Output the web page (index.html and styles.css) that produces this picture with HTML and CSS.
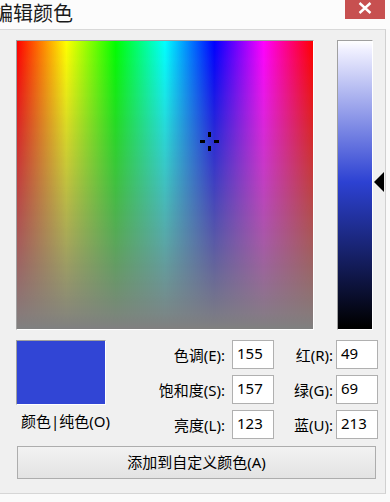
FILE: index.html
```html
<!DOCTYPE html>
<html lang="zh-CN">
<head>
<meta charset="utf-8">
<title>编辑颜色</title>
<link rel="stylesheet" href="styles.css">
</head>
<body>
<div class="window">
  <div class="titlebar">
    <span class="title">编辑颜色</span>
    <div class="close">
      <svg width="14" height="12" viewBox="0 0 14 12"><path d="M1.5 1 L12.5 11 M12.5 1 L1.5 11" stroke="#fff" stroke-width="2.4" fill="none"/></svg>
    </div>
  </div>
  <div class="dialog">
    <div class="pickers">
      <div class="spectrum">
        <div class="cross">
          <span class="arm arm-t"></span>
          <span class="arm arm-b"></span>
          <span class="arm arm-l"></span>
          <span class="arm arm-r"></span>
        </div>
      </div>
      <div class="lumwrap">
        <div class="lum"></div>
        <div class="arrow"></div>
      </div>
    </div>
    <div class="controls">
      <div class="swatchcol">
        <div class="swatch"></div>
        <div class="swlabel">颜色|纯色(O)</div>
      </div>
      <div class="fields">
        <label class="lbl">色调(E):</label><div class="inp">155</div>
        <label class="lbl lbl2">红(R):</label><div class="inp">49</div>
        <label class="lbl">饱和度(S):</label><div class="inp">157</div>
        <label class="lbl lbl2">绿(G):</label><div class="inp">69</div>
        <label class="lbl">亮度(L):</label><div class="inp">123</div>
        <label class="lbl lbl2">蓝(U):</label><div class="inp">213</div>
      </div>
    </div>
    <div class="add">添加到自定义颜色(A)</div>
  </div>
</div>
</body>
</html>
```
FILE: styles.css
```css
html, body {
  margin: 0;
  padding: 0;
}
body {
  width: 390px;
  height: 502px;
  overflow: hidden;
  background: #fafafa;
  font-family: "Noto Sans", "Noto Sans CJK SC", sans-serif;
  color: #000;
}
.window {
  width: 390px;
  height: 502px;
}
.titlebar {
  height: 29px;
  position: relative;
  background: #fcfcfc;
  display: flex;
  align-items: flex-start;
}
.title {
  margin-left: -7px;
  margin-top: 0px;
  font-family: "Noto Sans CJK SC", sans-serif;
  font-size: 20px;
  line-height: 25px;
  color: #1a1a1a;
  white-space: nowrap;
}
.close {
  position: absolute;
  left: 345px;
  top: 0;
  width: 40px;
  height: 19px;
  background: #c75050;
  display: flex;
  align-items: center;
  justify-content: center;
}
.close svg {
  display: block;
  margin-top: -3px;
}
.dialog {
  box-sizing: border-box;
  width: 386px;
  height: 465px;
  background: #f0f0f0;
  border-top: 1px solid #d9d9d9;
  border-right: 1px solid #d0d0d0;
  border-bottom: 1px solid #d6d6d6;
  padding: 10px 0 0 16px;
}
.pickers {
  display: flex;
  align-items: flex-start;
}
.spectrum {
  position: relative;
  box-sizing: border-box;
  width: 299px;
  height: 290px;
  border-top: 1px solid #a0a0a0;
  border-left: 1px solid #a0a0a0;
  border-right: 1px solid #ffffff;
  border-bottom: 1px solid #ffffff;
  background:
    linear-gradient(to bottom, rgba(128,128,128,0), rgba(128,128,128,1)),
    linear-gradient(to right, #ff0000 0%, #ffff00 16.67%, #00ff00 33.33%, #00ffff 50%, #0000ff 66.67%, #ff00ff 83.33%, #ff0000 100%);
}
.cross {
  position: absolute;
  left: 183px;
  top: 90px;
  width: 19px;
  height: 20px;
}
.arm {
  position: absolute;
  background: #000;
}
.arm-t { left: 8px; top: 1px; width: 3px; height: 5px; }
.arm-b { left: 8px; top: 15px; width: 3px; height: 5px; }
.arm-l { left: 0; top: 9px; width: 5px; height: 3px; }
.arm-r { left: 14px; top: 9px; width: 5px; height: 3px; }
.lumwrap {
  position: relative;
  margin-left: 23px;
  width: 48px;
  height: 290px;
}
.lum {
  box-sizing: border-box;
  width: 36px;
  height: 290px;
  border-top: 1px solid #a0a0a0;
  border-left: 1px solid #a0a0a0;
  border-right: 1px solid #ffffff;
  border-bottom: 1px solid #ffffff;
  background: linear-gradient(to bottom, #ffffff 0%, #f0f0ff 3%, hsl(232.5, 65%, 50%) 49%, #000000 99%);
}
.arrow {
  position: absolute;
  left: 37px;
  top: 132px;
  width: 0;
  height: 0;
  border-top: 10px solid transparent;
  border-bottom: 10px solid transparent;
  border-right: 10px solid #000;
}
.controls {
  display: flex;
  align-items: flex-start;
  margin-top: 10px;
}
.swatchcol {
  width: 104px;
  display: flex;
  flex-direction: column;
}
.swatch {
  box-sizing: border-box;
  width: 90px;
  height: 65px;
  background: #3145d5;
  border-top: 1px solid #a0a0a0;
  border-left: 1px solid #a0a0a0;
  border-right: 1px solid #ffffff;
  border-bottom: 1px solid #ffffff;
}
.swlabel {
  margin-top: 6px;
  padding-left: 5px;
  font-size: 15px;
  line-height: 20px;
  white-space: nowrap;
}
.fields {
  display: grid;
  grid-template-columns: 112px 42px 62px 42px;
  grid-auto-rows: 29px;
  row-gap: 6px;
}
.lbl {
  font-size: 15px;
  line-height: 29px;
  text-align: right;
  padding-right: 7px;
  white-space: nowrap;
  padding-top: 1px;
  box-sizing: border-box;
}
.lbl2 {
  padding-right: 3px;
}
.inp {
  box-sizing: border-box;
  background: #fff;
  border: 1px solid #b0b0b0;
  font-size: 15px;
  line-height: 24px;
  padding-left: 4px;
  padding-top: 0;
}
.add {
  box-sizing: border-box;
  margin-top: 7px;
  margin-left: 1px;
  width: 359px;
  height: 33px;
  border: 1px solid #adadad;
  background: linear-gradient(to bottom, #f2f2f2, #e3e3e3);
  font-size: 15px;
  line-height: 30px;
  text-align: center;
}
```
